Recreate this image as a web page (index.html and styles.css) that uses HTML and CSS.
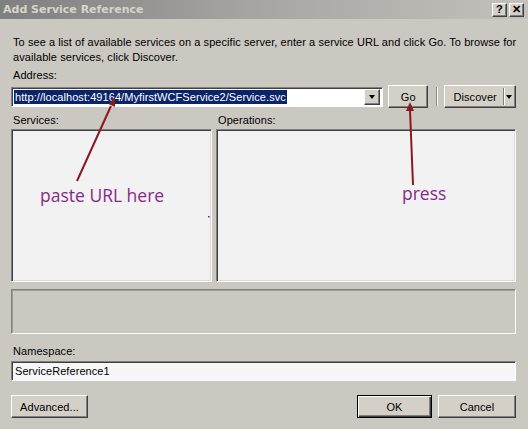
FILE: index.html
```html
<!DOCTYPE html>
<html>
<head>
<meta charset="utf-8">
<link rel="stylesheet" href="styles.css">
</head>
<body>
<div class="dialog">
  <div class="titlebar">
    <span class="title">Add Service Reference</span>
    <div class="title-btns">
      <span class="tbtn">?</span>
      <span class="tbtn">✕</span>
    </div>
  </div>
  <div class="content">
    <p class="intro">To see a list of available services on a specific server, enter a service URL and click Go. To browse for available services, click Discover.</p>
    <div class="label lbl-address">Address:</div>
    <div class="address-row">
      <div class="combo">
        <div class="combo-text"><span class="sel">http://localhost:49164/MyfirstWCFService2/Service.svc</span></div>
        <div class="combo-btn"><span class="tri"></span></div>
      </div>
      <button class="btn go">Go</button>
      <div class="sep"></div>
      <div class="btn split">
        <span class="split-main">Discover</span>
        <span class="split-arrow"><span class="tri"></span></span>
      </div>
    </div>
    <div class="lists">
      <div class="col col-services">
        <div class="label">Services:</div>
        <div class="listbox"></div>
      </div>
      <div class="col col-ops">
        <div class="label">Operations:</div>
        <div class="listbox"></div>
      </div>
    </div>
    <div class="status"></div>
    <div class="label lbl-ns">Namespace:</div>
    <div class="field">ServiceReference1</div>
    <div class="footer">
      <button class="btn adv">Advanced...</button>
      <div class="right-btns">
        <button class="btn ok">OK</button>
        <button class="btn cancel">Cancel</button>
      </div>
    </div>
  </div>

  <svg class="annot" width="528" height="429" viewBox="0 0 528 429">
    <line x1="77" y1="181" x2="111" y2="106" stroke="#8a1a1e" stroke-width="2"/>
    <polygon points="115,97 108.4,104 115,107" fill="#8a1a1e"/>
    <line x1="413" y1="185" x2="410" y2="110" stroke="#8a1a1e" stroke-width="2"/>
    <polygon points="410,102 406,111 414,111" fill="#8a1a1e"/>
    <rect x="208" y="216" width="1.5" height="1.5" fill="#3a3a80"/>
  </svg>
  <div class="note note-paste">paste URL here</div>
  <div class="note note-press">press</div>
</div>
</body>
</html>
```

FILE: styles.css
```css
* { box-sizing: border-box; }
html, body { margin: 0; padding: 0; }
body {
  background: #cbc7c1;
  font-family: "Liberation Sans", Arial, sans-serif;
  font-size: 11px;
  letter-spacing: 0.07px;
  color: #000;
}
.dialog {
  position: relative;
  width: 528px;
  height: 429px;
  background: #cbc7c1;
  overflow: hidden;
}
.titlebar {
  height: 19px;
  display: flex;
  align-items: center;
  justify-content: space-between;
  padding: 0 4px 0 3px;
  background: linear-gradient(to right, #7f7f7f 0%, #a5a3a0 45%, #c4c1bc 100%);
}
.title {
  font-family: "DejaVu Sans", sans-serif;
  font-weight: bold;
  font-size: 11px;
  color: #d8d4cc;
  letter-spacing: 0;
}
.title-btns { display: flex; gap: 2px; }
.tbtn {
  width: 15px;
  height: 14px;
  display: flex;
  align-items: center;
  justify-content: center;
  background: #d4d0c8;
  border: 1px solid;
  border-color: #fff #404040 #404040 #fff;
  box-shadow: inset -1px -1px #808080;
  font-weight: bold;
  font-size: 11px;
  line-height: 1;
  color: #000;
}
.content {
  padding: 0 12px 0 11px;
}
.intro {
  margin: 16px -10px 0 2px;
  line-height: 15px;
}
.label {
  line-height: 15px;
  padding-left: 2px;
}
.lbl-address { margin-top: 3px; }
.address-row {
  display: flex;
  align-items: center;
  height: 23px;
  margin-top: 2px;
}
.combo {
  width: 373px;
  height: 20px;
  display: flex;
  background: #fff;
  border: 1px solid;
  border-color: #808080 #fff #fff #808080;
  box-shadow: inset 1px 1px #404040;
  padding: 2px 2px 2px 2px;
}
.combo-text {
  flex: 1;
  display: flex;
  align-items: center;
  overflow: hidden;
  white-space: nowrap;
}
.sel {
  background: #0a246a;
  color: #fff;
  line-height: 14px;
  padding: 0 1px;
}
.combo-btn {
  width: 16px;
  background: #d4d0c8;
  border: 1px solid;
  border-color: #fff #404040 #404040 #fff;
  box-shadow: inset -1px -1px #808080;
  display: flex;
  align-items: center;
  justify-content: center;
  margin: -1px 0;
}
.tri {
  width: 0; height: 0;
  border-left: 3.5px solid transparent;
  border-right: 3.5px solid transparent;
  border-top: 4px solid #000;
}
.btn {
  font-family: inherit;
  font-size: 11px;
  letter-spacing: 0.07px;
  color: #000;
  background: #d4d0c8;
  border: 1px solid;
  border-color: #fff #404040 #404040 #fff;
  box-shadow: inset -1px -1px #808080;
  padding: 0;
  height: 23px;
  display: flex;
  align-items: center;
  justify-content: center;
}
.go { width: 40px; margin-left: 5px; }
.sep {
  width: 2px;
  height: 19px;
  margin: 0 6px 0 8px;
  border-left: 1px solid #8a8782;
  border-right: 1px solid #fff;
}
.split { width: 72px; justify-content: flex-start; }
.split-main {
  width: 58px;
  text-align: center;
  padding-left: 2px;
}
.split-arrow {
  flex: 1;
  align-self: stretch;
  margin: 2px 1px 2px 0;
  border-left: 1px solid #808080;
  box-shadow: inset 1px 0 #fff;
  display: flex;
  align-items: center;
  justify-content: center;
}
.lists {
  display: flex;
  gap: 4px;
  margin-top: 5px;
}
.col-services { width: 201px; }
.col-ops { flex: 1; }
.col-ops .label { padding-left: 2px; }
.listbox {
  margin-top: 1px;
  height: 153px;
  background: #f2f2f2;
  border: 1px solid;
  border-color: #808080 #fff #fff #808080;
  box-shadow: inset 1px 1px #404040, inset -1px -1px #dcd8d0;
}
.status {
  margin-top: 7px;
  height: 45px;
  border: 1px solid;
  border-color: #808080 #fff #fff #808080;
  box-shadow: inset 1px 1px #a09c96;
}
.lbl-ns { margin-top: 10px; }
.field {
  margin-top: 2px;
  height: 20px;
  background: #f7f7f7;
  border: 1px solid;
  border-color: #808080 #fff #fff #808080;
  box-shadow: inset 1px 1px #404040;
  padding: 0 3px;
  line-height: 18px;
}
.footer {
  display: flex;
  justify-content: space-between;
  margin-top: 14px;
}
.adv { width: 77px; }
.right-btns { display: flex; gap: 6px; }
.ok {
  width: 75px;
  border: 1px solid #000;
  box-shadow: inset 1px 1px #fff, inset -1px -1px #404040, inset -2px -2px #808080;
}
.cancel { width: 78px; }
.annot {
  position: absolute;
  left: 0;
  top: 0;
  pointer-events: none;
}
.note {
  position: absolute;
  font-family: "Open Sans", "Liberation Sans", sans-serif;
  font-size: 17.5px;
  letter-spacing: 0;
  color: #872a8a;
  line-height: 20px;
}
.note-paste { left: 40px; top: 185px; }
.note-press { left: 402px; top: 183px; }
```
